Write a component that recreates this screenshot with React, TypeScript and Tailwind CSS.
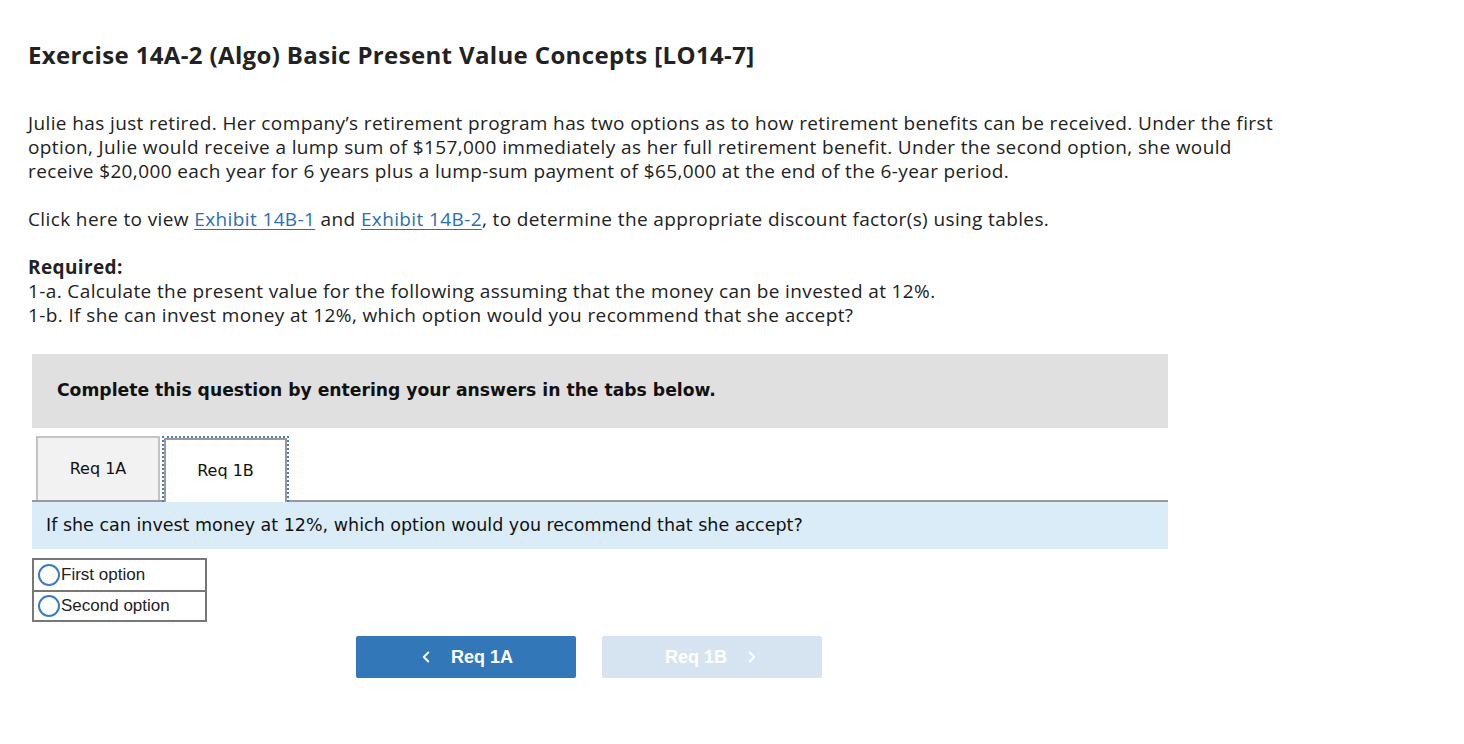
import { ChevronLeft, ChevronRight } from 'lucide-react';

const body = "font-['Open_Sans','Liberation_Sans',sans-serif]";
const verdana = "font-['DejaVu_Sans','Verdana',sans-serif]";

function Radio({ label }: { label: string }) {
  return (
    <div className="flex h-[32px] items-center gap-px border-[2px] border-[#777] px-[4px] first:border-b-0">
      <span className="h-[22px] w-[22px] rounded-full border-[2px] border-[#3b7dc4] bg-white" />
      <span className="font-['Liberation_Sans',Arial,sans-serif] text-[17px] text-[#222]">{label}</span>
    </div>
  );
}

export default function App() {
  return (
    <div className="min-h-[744px] w-[1464px] bg-white text-[#222]">
      <div className="px-[28px] pt-[40px]">
        <h1 className={`${body} text-[24px] font-bold leading-[30px] tracking-[0.015em] text-[#222]`}>
          Exercise 14A-2 (Algo) Basic Present Value Concepts [LO14-7]
        </h1>

        <div className={`${body} mt-[41px] w-[1260px] text-[19px] leading-[24px] tracking-[0.02em]`}>
          <p>
            Julie has just retired. Her company’s retirement program has two options as to how retirement benefits can be
            received. Under the first option, Julie would receive a lump sum of $157,000 immediately as her full retirement
            benefit. Under the second option, she would receive $20,000 each year for 6 years plus a lump-sum payment of
            $65,000 at the end of the 6-year period.
          </p>
          <p className="mt-[24px]">
            Click here to view{' '}
            <span className="text-[#2a6fb5] underline decoration-[1px] underline-offset-[3px]">Exhibit 14B-1</span> and{' '}
            <span className="text-[#2a6fb5] underline decoration-[1px] underline-offset-[3px]">Exhibit 14B-2</span>, to
            determine the appropriate discount factor(s) using tables.
          </p>
          <p className="mt-[24px] font-bold">Required:</p>
          <p>1-a. Calculate the present value for the following assuming that the money can be invested at 12%.</p>
          <p>1-b. If she can invest money at 12%, which option would you recommend that she accept?</p>
        </div>
      </div>

      <div className="ml-[32px] mt-[27px] w-[1136px]">
        <div className={`${verdana} flex h-[74px] items-center bg-[#e0e0e0] px-[25px] text-[17.2px] font-bold text-[#111]`}>
          Complete this question by entering your answers in the tabs below.
        </div>

        <div className="mt-[8px] flex items-end border-b-[2px] border-[#999] pl-[4px]">
          <div className={`${verdana} flex h-[64px] w-[124px] items-center justify-center border-[2px] border-b-0 border-[#c4c4c4] bg-[#f2f2f2] text-[16px] text-[#111]`}>
            Req 1A
          </div>
          <div className="ml-[2px] -mb-[2px] border-[2px] border-dotted border-b-0 border-[#3f82c8]">
            <div className={`${verdana} flex h-[64px] w-[123px] items-center justify-center border-[2px] border-b-0 border-[#9a9a9a] bg-white text-[16px] text-[#111]`}>
              Req 1B
            </div>
          </div>
        </div>

        <div className={`${verdana} flex h-[47px] items-center bg-[#dbecf9] px-[14px] text-[17.5px] text-[#111]`}>
          If she can invest money at 12%, which option would you recommend that she accept?
        </div>

        <div className="mt-[9px] w-[175px]">
          <Radio label="First option" />
          <Radio label="Second option" />
        </div>

        <div className="mt-[14px] flex gap-[26px] pl-[324px]">
          <button className="flex h-[42px] w-[220px] items-center justify-center gap-[16px] rounded-[2px] bg-[#3278b8] font-['Liberation_Sans',Arial,sans-serif] text-[18px] font-bold text-white">
            <ChevronLeft size={18} strokeWidth={2.5} className="ml-[-2px]" />
            Req 1A
          </button>
          <button className="flex h-[42px] w-[220px] items-center justify-center gap-[16px] rounded-[2px] bg-[#d6e4f1] font-['Liberation_Sans',Arial,sans-serif] text-[18px] font-bold text-white">
            Req 1B
            <ChevronRight size={18} strokeWidth={2.5} className="mr-[-2px]" />
          </button>
        </div>
      </div>
    </div>
  );
}
